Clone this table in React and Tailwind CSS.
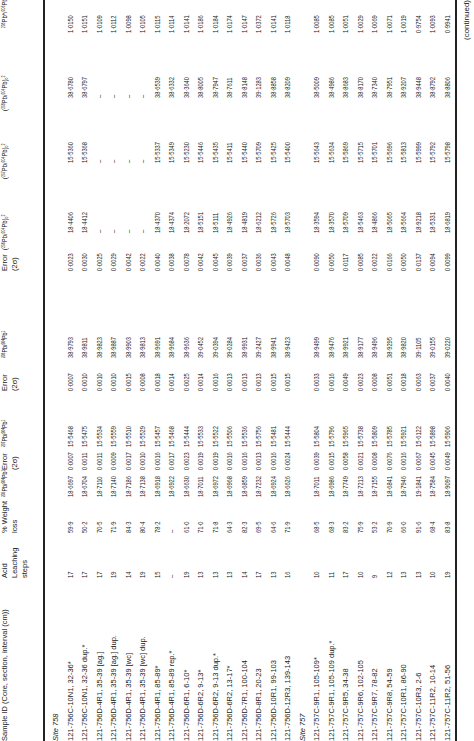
import React from "react";

const cols =
  "grid grid-cols-[163px_45px_36px_27px_23px_56px_33px_87px_21px_71px_68px_78px_52px]";

const site758 = [
  ["121-756C-10N1, 32-36*", "17", "59·9", "18·6697", "0·0007", "15·5468", "0·0007", "38·9793", "0·0023", "18·4406", "15·5360", "38·6780", "1·0150"],
  ["121-756C-10N1, 32-36 dup.*", "17", "50·2", "18·6704", "0·0011", "15·5475", "0·0010", "38·9811", "0·0030", "18·4412", "15·5368", "38·6797", "1·0151"],
  ["121-756D-4R1, 35-39 [ag.]", "17", "70·5", "18·7110", "0·0011", "15·5534", "0·0010", "38·9823", "0·0025", "–", "–", "–", "1·0109"],
  ["121-756D-4R1, 35-39 [ag.] dup.", "19", "71·9", "18·7140", "0·0009", "15·5559", "0·0010", "38·9887", "0·0029", "–", "–", "–", "1·0112"],
  ["121-756D-4R1, 35-39 [wc]", "14", "84·3", "18·7186", "0·0017", "15·5510", "0·0015", "38·9903", "0·0042", "–", "–", "–", "1·0098"],
  ["121-756D-4R1, 35-39 [wc] dup.", "19", "80·4", "18·7138", "0·0010", "15·5529", "0·0008", "38·9813", "0·0022", "–", "–", "–", "1·0105"],
  ["121-756D-4R1, 85-89*", "15", "78·2", "18·6918", "0·0016", "15·5457", "0·0018", "38·9691", "0·0040", "18·4370", "15·5337", "38·6539", "1·0115"],
  ["121-756D-4R1, 85-89 rep.*", "–", "–", "18·6922", "0·0017", "15·5468", "0·0014", "38·9684", "0·0038", "18·4374", "15·5349", "38·6332", "1·0114"],
  ["121-756D-6R1, 6-10*", "19", "61·0", "18·6630", "0·0023", "15·5444", "0·0025", "38·9636", "0·0078", "18·2072", "15·5230", "38·3640", "1·0141"],
  ["121-756D-6R2, 9-13*", "13", "71·0", "18·7011", "0·0019", "15·5533", "0·0014", "39·0452", "0·0042", "18·5151", "15·5446", "38·8005", "1·0186"],
  ["121-756D-6R2, 9-13 dup.*", "13", "71·8", "18·6972", "0·0019", "15·5522", "0·0016", "39·0394", "0·0045", "18·5111", "15·5435", "38·7947", "1·0184"],
  ["121-756D-6R2, 13-17*", "13", "64·3", "18·6968", "0·0016", "15·5506", "0·0013", "39·0284", "0·0039", "18·4926", "15·5411", "38·7611", "1·0174"],
  ["121-756D-7R1, 100-104", "14", "82·3", "18·6859", "0·0016", "15·5536", "0·0013", "38·9931", "0·0037", "18·4819", "15·5440", "38·8148", "1·0147"],
  ["121-756D-8R1, 20-23", "17", "69·5", "18·7232", "0·0013", "15·5756", "0·0013", "39·2427", "0·0036", "18·6212", "15·5709", "39·1283", "1·0372"],
  ["121-756D-10R1, 99-103", "13", "64·6", "18·6924", "0·0016", "15·5481", "0·0015", "38·9941", "0·0043", "18·5726", "15·5425", "38·8858", "1·0141"],
  ["121-756D-12R3, 139-143", "16", "71·9", "18·6626", "0·0024", "15·5444", "0·0015", "38·9423", "0·0048", "18·5703", "15·5400", "38·8209", "1·0118"],
];

const site757 = [
  ["121-757C-9R1, 105-109*", "10", "68·5", "18·7011", "0·0039", "15·5804", "0·0033", "38·9499", "0·0090", "18·3594", "15·5643", "38·5009", "1·0085"],
  ["121-757C-9R1, 105-109 dup.*", "11", "68·3", "18·6986", "0·0015", "15·5796", "0·0016", "38·9476", "0·0050", "18·3570", "15·5634", "38·4986", "1·0085"],
  ["121-757C-9R5, 34-38", "17", "83·2", "18·7749", "0·0058", "15·5965", "0·0049", "38·9921", "0·0117", "18·5709", "15·5869", "38·8683", "1·0051"],
  ["121-757C-9R6, 102-105", "10", "75·9", "18·7213", "0·0021", "15·5738", "0·0023", "38·9177", "0·0085", "18·5463", "15·5715", "38·8170", "1·0029"],
  ["121-757C-9R7, 78-82", "9", "53·2", "18·7155", "0·0008", "15·5809", "0·0008", "38·9496", "0·0022", "18·4866", "15·5701", "38·7340", "1·0069"],
  ["121-757C-9R8, 54-59", "12", "70·9", "18·6841", "0·0076", "15·5785", "0·0051", "38·9295", "0·0166", "18·5065", "15·5696", "38·7951", "1·0071"],
  ["121-757C-10R1, 86-90", "13", "66·0", "18·7946", "0·0016", "15·5921", "0·0018", "38·9820", "0·0050", "18·5664", "15·5813", "38·9207", "1·0019"],
  ["121-757C-10R3, 2-6", "13", "91·6", "19·1841", "0·0067", "15·6122", "0·0063", "39·1105", "0·0137", "18·9218", "15·5999", "38·9448", "0·9754"],
  ["121-757C-11R2, 10-14", "10", "68·4", "18·7584", "0·0045", "15·5898", "0·0037", "39·0155", "0·0094", "18·5331", "15·5792", "38·8792", "1·0093"],
  ["121-757C-11R2, 51-56", "19", "83·8", "18·9097", "0·0049", "15·5906", "0·0040", "39·0220", "0·0099", "18·6819", "15·5798", "38·8806", "0·9941"],
];

// left padding of the values in each column
const pad = ["", "", "", "", "", "", "", "", "", "pl-[17px]", "pl-[16px]", "pl-[13px]", ""];

function Iso({ a, b }) {
  return (
    <>
      <sup className="text-[4.5px]">{a}</sup>Pb/<sup className="text-[4.5px]">{b}</sup>Pb
    </>
  );
}

function Ratio({ a, b, mark }) {
  return (
    <div className="whitespace-nowrap origin-left scale-x-[0.72]">
      <Iso a={a} b={b} />
      <sup className="text-[4.5px]">{mark}</sup>
    </div>
  );
}

function Initial({ a, b }) {
  return (
    <div className="whitespace-nowrap origin-left scale-x-[0.78]">
      (<Iso a={a} b={b} />)<sub className="text-[4.5px]">o</sub>
      <sup className="text-[4.5px]">2</sup>
    </div>
  );
}

function Err() {
  return (
    <div className="flex flex-col">
      <span>Error</span>
      <span>(2σ)</span>
    </div>
  );
}

function Row({ cells }) {
  return (
    <div className={`${cols} h-[14.5px] items-center`}>
      {cells.map((c, i) =>
        i === 0 ? (
          <div key={i} className="whitespace-nowrap">
            {c}
          </div>
        ) : (
          <div key={i} className={pad[i]}>
            <div className="whitespace-nowrap origin-left scale-x-[0.76]">{c}</div>
          </div>
        )
      )}
    </div>
  );
}

function SiteRow({ name }) {
  return <div className="h-[14.5px] flex items-center italic">{name}</div>;
}

export default function App() {
  return (
    <div className="relative w-[474px] h-[741px] overflow-hidden bg-white">
      <div
        className="absolute left-0 top-[741px] w-[760px] h-[474px] origin-top-left -rotate-90 text-[7.5px] leading-[10px] text-[#222]"
        style={{ fontFamily: '"Liberation Sans", Arial, sans-serif' }}
      >
        {/* header */}
        <div className={`${cols} h-[43px]`}>
          <div className="whitespace-nowrap">Sample ID (Core, section, interval (cm))</div>
          <div className="flex flex-col">
            <span>Acid</span>
            <span>Leaching</span>
            <span>steps</span>
          </div>
          <div className="flex flex-col whitespace-nowrap">
            <span>% Weight</span>
            <span>loss</span>
          </div>
          <Ratio a="206" b="204" mark="1" />
          <Err />
          <Ratio a="207" b="204" mark="1" />
          <Err />
          <Ratio a="208" b="204" mark="1" />
          <Err />
          <Initial a="206" b="204" />
          <Initial a="207" b="204" />
          <Initial a="208" b="204" />
          <div className="whitespace-nowrap pl-[6px] origin-left scale-x-[0.78]">
            <sup className="text-[4.5px]">208</sup>Pb*/<sup className="text-[4.5px]">206</sup>Pb*
            <sup className="text-[4.5px]">3</sup>
          </div>
        </div>
        <div className="h-[2px] bg-[#222]" />

        <div className="pt-[4px]">
          <SiteRow name="Site 758" />
          {site758.map((r, i) => (
            <Row key={i} cells={r} />
          ))}
          <SiteRow name="Site 757" />
          {site757.map((r, i) => (
            <Row key={i} cells={r} />
          ))}
        </div>
        <div className="h-[2px] bg-[#222]" />
        <div className="flex justify-end pr-[19px] pt-[5px] text-[8px]">(continued)</div>
      </div>
    </div>
  );
}
